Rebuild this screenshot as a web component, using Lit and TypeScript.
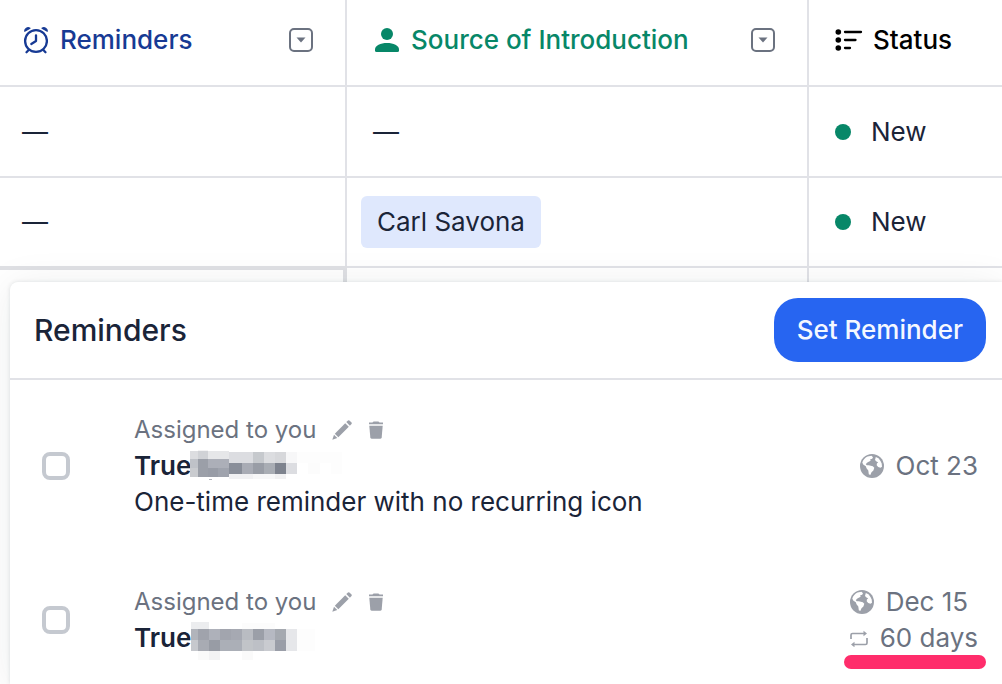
import { LitElement, html, css, svg } from "lit";
import { customElement, property } from "lit/decorators.js";

type Cell = [x: number, y: number, w: number, h: number, fill: string];

interface Reminder {
  id: string;
  name: string;
  redaction: Cell[];
  note?: string;
  date: string;
  repeat?: string;
}

const REMINDERS: Reminder[] = [
  {
    id: "r1",
    name: "True",
    note: "One-time reminder with no recurring icon",
    date: "Oct 23",
    redaction: [
      [0, 5, 8, 8, "#dcdde0"], [8, 5, 10, 8, "#d0d2d6"], [18, 5, 21, 8, "#e6e7e9"],
      [8, 4, 10, 1, "#f3f3f4"], [0, 13, 8, 9, "#bfc2c8"], [0, 22, 8, 9, "#c9cbcf"],
      [8, 13, 10, 18, "#9b9fa8"], [18, 13, 21, 9, "#acafb8"], [18, 22, 10, 9, "#989ca6"],
      [28, 22, 11, 9, "#9fa3ad"], [19, 33, 3, 1, "#b4b7bd"],
      [39, 6, 24, 11, "#dcdde1"], [63, 6, 11, 11, "#c6c9cd"], [74, 6, 11, 11, "#dcdde0"],
      [85, 6, 11, 11, "#d7d8db"], [96, 6, 11, 11, "#f7f7f8"],
      [39, 17, 13, 11, "#898e99"], [52, 17, 11, 11, "#a9acb5"], [63, 17, 11, 11, "#999da6"],
      [74, 17, 11, 11, "#a9adb4"], [85, 17, 11, 11, "#7e838e"], [96, 17, 11, 11, "#dcdde1"],
      [39, 28, 24, 5, "#f1f1f3"], [63, 28, 22, 5, "#f7f7f8"], [85, 28, 11, 5, "#f1f1f2"],
      [107, 6, 45, 11, "#fdfdfd"], [118, 17, 12, 11, "#fcfcfc"], [141, 17, 11, 11, "#fdfdfd"],
    ],
  },
  {
    id: "r2",
    name: "True",
    date: "Dec 15",
    repeat: "60 days",
    redaction: [
      [1, 4, 18, 7, "#ecedef"], [1, 11, 7, 11, "#b1b4bb"], [8, 11, 11, 11, "#a0a3ac"],
      [19, 11, 11, 11, "#aeb1ba"], [30, 11, 11, 11, "#a2a5ae"], [41, 11, 11, 11, "#a6a9b2"],
      [52, 11, 11, 11, "#b9bcc2"], [63, 11, 11, 11, "#9b9fa8"], [74, 11, 11, 11, "#b6b9c2"],
      [85, 11, 11, 11, "#a5a9b0"], [96, 11, 11, 22, "#e6e7ea"],
      [1, 22, 7, 11, "#c6c8cd"], [8, 22, 11, 11, "#a8abb3"], [19, 22, 11, 11, "#989ca5"],
      [30, 22, 22, 11, "#abafb7"], [52, 22, 11, 11, "#c1c4c8"], [63, 22, 11, 11, "#bdc0c6"],
      [74, 22, 11, 11, "#c9cbd0"], [85, 22, 11, 11, "#9a9ea8"],
      [8, 33, 11, 9, "#fafafa"], [19, 33, 11, 9, "#f3f3f4"], [52, 33, 11, 9, "#fafafa"],
      [52, 5, 33, 6, "#fcfcfc"], [107, 11, 18, 22, "#fdfdfd"],
    ],
  },
];

const alarmIcon = svg`<svg width="26" height="28" viewBox="-1 0 26 28" aria-hidden="true" fill="none" stroke="currentColor" stroke-width="2.300" stroke-linecap="round" stroke-linejoin="round">
  <circle cx="13" cy="15" r="10.900"/>
  <path d="M13 9.300V15L8.300 18M5.400 24.200 3.500 26.200M20.600 24.200 22.500 26.200"/>
  <path d="M1.700 5.200C1.600 2.600 4.500.700 7 2.200ZM24.300 5.200C24.400 2.600 21.500.700 19 2.200Z" fill="currentColor" stroke-width="1.200"/>
</svg>`;

const personIcon = svg`<svg width="26" height="24" viewBox="-2 0 26 24" aria-hidden="true" fill="currentColor">
  <circle cx="12" cy="6" r="6"/>
  <path d="M0 21.500C0 17.500 5.500 15 12 15S24 17.500 24 21.500V22.500Q24 24 22.500 24H1.500Q0 24 0 22.500Z"/>
</svg>`;

const listIcon = svg`<svg width="26" height="22" viewBox="0 0 26 22" overflow="visible" aria-hidden="true" fill="currentColor" stroke="currentColor" stroke-width="2.300" stroke-linecap="round">
  <path d="M10 3H26M10 11H20.500M10 19H15"/>
  <g stroke="none"><circle cx="3.300" cy="3" r="2.800"/><circle cx="3.300" cy="11" r="2.800"/><circle cx="3.300" cy="19" r="2.800"/></g>
</svg>`;

const caretIcon = svg`<svg width="10" height="6" viewBox="0 0 10 6" aria-hidden="true"><path d="M.5.500H9.500L5 5.500Z" fill="currentColor"/></svg>`;

const pencilIcon = svg`<svg width="20" height="20" viewBox="0 0 20 20" aria-hidden="true" fill="currentColor">
  <path d="M14.300 2.100 16 .5Q16.700-.1 17.400.5L19.500 2.600Q20.100 3.300 19.500 4L17.900 5.700Z"/>
  <path d="M13.200 3.200 16.800 6.800 6.300 17.200 2.800 13.700Z"/>
  <path d="M2 14.700 5.300 18 .3 19.700Z"/>
</svg>`;

const trashIcon = svg`<svg width="16" height="18" viewBox="0 0 16 18" aria-hidden="true" fill="currentColor">
  <path d="M1 1.500H4.500Q5 .5 6 .5H10Q11 .5 11.500 1.500H15V3.300H1Z"/>
  <path d="M1.300 4.700H14.700L13.700 16.200Q13.500 17.700 12 17.700H4Q2.500 17.700 2.300 16.200Z"/>
</svg>`;

const globeIcon = svg`<svg width="24" height="24" viewBox="0 0 24 24" aria-hidden="true">
  <circle cx="12" cy="12" r="12" fill="#9ca0a9"/>
  <path fill="#fff" d="M2.300 8.500C3.200 5.800 5 3.700 7.500 2.500L11.500 1.800 13 3.200 12.200 4.800 10 5.400 10.700 6.800 8.700 7.800 7 8.800 5.800 10.200 6.800 11.300 8.800 11.200 12.800 12.300 14.300 13.700 13.400 16.500 11.500 18.200 10.300 21 8.800 20.300 8.300 16.500 6.500 14.200 5.800 12.200 3.200 10.500Z"/>
  <path fill="#fff" d="M15.800 3 18.500 4.300 20.500 7 21.700 9.500 22 12.800 20.500 13.800 18.200 13 16.700 11.300 16.900 9.500 18.200 8.200 16.500 7.500 15 6Z"/>
</svg>`;

const repeatIcon = svg`<svg width="18" height="18" viewBox="0 -1 18 18" aria-hidden="true" fill="none" stroke="#9ca0a9" stroke-width="1.700">
  <path d="M1 9V5Q1 3.500 2.500 3.500H14M17 8V13Q17 14.500 15.500 14.500H4"/>
  <path d="M13.500.7 17 3.500 13.500 6.300ZM4.500 11.700 1 14.500 4.500 17.300Z" fill="#9ca0a9" stroke="none"/>
</svg>`;

@customElement("reminder-item")
export class ReminderItem extends LitElement {
  @property({ attribute: false }) item!: Reminder;

  static styles = css`
    :host {
      display: flex;
      align-items: center;
      padding: 32px 24px 32px 32px;
      font-size: 26px;
      line-height: 36px;
      color: #1a2438;
    }
    .check {
      appearance: none;
      box-sizing: border-box;
      flex: none;
      width: 28px;
      height: 28px;
      margin: 0 64px 0 0;
      border: 4px solid #c5c9d0;
      border-radius: 8px;
      background: #fff;
    }
    .body {
      flex: 1;
      min-width: 0;
    }
    .assigned {
      display: flex;
      align-items: center;
      font-size: 24px;
      color: #6b7280;
    }
    .tool {
      display: flex;
      padding: 0;
      margin-left: 16px;
      border: 0;
      background: none;
      color: #9ca0a9;
    }
    .name {
      display: flex;
      font-weight: 600;
    }
    .redacted {
      height: 36px;
      width: 152px;
      overflow: visible;
    }
    .when {
      position: relative;
      display: flex;
      flex-direction: column;
      flex: none;
      color: #6b7280;
    }
    .line {
      display: flex;
      align-items: center;
      gap: 12px;
    }
    .marker {
      position: absolute;
      left: -6px;
      right: -8px;
      bottom: -13px;
      height: 14px;
      border-radius: 7px;
      background: #ff2d6b;
    }
  `;

  render() {
    const r = this.item;
    return html`
      <input class="check" type="checkbox" id=${r.id} aria-label="Complete reminder" />
      <div class="body">
        <div class="assigned">
          <span>Assigned to you</span>
          <button class="tool" aria-label="Edit">${pencilIcon}</button>
          <button class="tool" aria-label="Delete">${trashIcon}</button>
        </div>
        <label class="name" for=${r.id}>
          <span>${r.name}</span>
          <svg class="redacted" viewBox="1 2 152 36" shape-rendering="crispEdges" aria-hidden="true">
            ${r.redaction.map(([x, y, w, h, fill]) => svg`<rect x=${x} y=${y} width=${w} height=${h} fill=${fill}></rect>`)}
          </svg>
        </label>
        ${r.note ? html`<div>${r.note}</div>` : null}
      </div>
      <div class="when">
        <div class="line">${globeIcon}<span>${r.date}</span></div>
        ${r.repeat
          ? html`<div class="line">${repeatIcon}<span>${r.repeat}</span></div><div class="marker"></div>`
          : null}
      </div>
    `;
  }
}

@customElement("app-root")
export class AppRoot extends LitElement {
  static styles = css`
    :host {
      display: block;
      position: relative;
      min-height: 100vh;
      overflow: hidden;
      background: #fff;
      color: #1a2438;
      font: 400 26px/36px Inter, sans-serif;
    }
    button {
      font: inherit;
    }
    .grid {
      width: 100%;
      table-layout: fixed;
      border-collapse: separate;
      border-spacing: 0;
    }
    .reminders {
      width: 347px;
    }
    .source {
      width: 462px;
    }
    th,
    td {
      box-sizing: border-box;
      height: 90px;
      padding: 0 32px 0 26px;
      border-right: 2px solid #e1e2e7;
      border-bottom: 2px solid #e1e2e7;
      text-align: left;
      white-space: nowrap;
    }
    th {
      height: 87px;
      padding-bottom: 6px;
      font-weight: 500;
    }
    tbody tr:first-child td {
      height: 91px;
    }
    tbody tr:last-child td {
      border-bottom: 0;
    }
    td:first-child,
    th:first-child {
      padding-left: 22px;
    }
    th:last-child,
    td:last-child {
      border-right: 0;
    }
    .head {
      display: flex;
      align-items: center;
      gap: 12px;
    }
    .title {
      flex: 1;
    }
    .blue {
      color: #173a94;
    }
    .green {
      color: #078768;
    }
    .black {
      color: #000;
    }
    .caret {
      display: flex;
      align-items: center;
      justify-content: center;
      box-sizing: border-box;
      width: 24px;
      height: 24px;
      padding: 0;
      border: 2px solid #6b7280;
      border-radius: 5px;
      background: none;
      color: #6b7280;
    }
    .status {
      display: flex;
      align-items: center;
      gap: 20px;
    }
    .dot {
      width: 16px;
      height: 16px;
      border-radius: 50%;
      background: #078768;
    }
    td.chips {
      padding-left: 14px;
    }
    .chip {
      display: inline-block;
      padding: 8px 16px;
      border-radius: 6px;
      background: #dfe8fd;
    }
    td.selected {
      position: relative;
    }
    .ring {
      position: absolute;
      inset: -2px -2px 0 -4px;
      border: 4px solid #dfe0e4;
      border-bottom: 0;
    }
    .panel {
      position: absolute;
      top: 282px;
      left: 10px;
      right: 0;
      bottom: 0;
      border-radius: 8px 0 0 0;
      background: #fff;
      box-shadow: 0 0 4px rgba(20, 30, 40, 0.12), 0 4px 40px rgba(20, 40, 40, 0.08);
    }
    .bar {
      display: flex;
      align-items: center;
      justify-content: space-between;
      padding: 16px 16px 16px 24px;
      border-bottom: 2px solid #e1e2e7;
    }
    .heading {
      margin: 0;
      font-size: 30px;
      font-weight: 500;
    }
    .set {
      padding: 14px 23px;
      border: 0;
      border-radius: 24px;
      background: #2765f1;
      color: #f5f8ff;
      font-weight: 500;
    }
  `;

  render() {
    const status = html`<div class="status"><span class="dot"></span>New</div>`;
    return html`
      <table class="grid">
        <colgroup>
          <col class="reminders" />
          <col class="source" />
          <col />
        </colgroup>
        <thead>
          <tr>
            <th>
              <div class="head blue">
                ${alarmIcon}<span class="title">Reminders</span>
                <button class="caret" aria-label="Reminders options">${caretIcon}</button>
              </div>
            </th>
            <th>
              <div class="head green">
                ${personIcon}<span class="title">Source of Introduction</span>
                <button class="caret" aria-label="Source options">${caretIcon}</button>
              </div>
            </th>
            <th>
              <div class="head black">${listIcon}<span class="title">Status</span></div>
            </th>
          </tr>
        </thead>
        <tbody>
          <tr><td>—</td><td>—</td><td>${status}</td></tr>
          <tr><td>—</td><td class="chips"><span class="chip">Carl Savona</span></td><td>${status}</td></tr>
          <tr><td class="selected"><div class="ring"></div></td><td></td><td></td></tr>
        </tbody>
      </table>
      <section class="panel" aria-labelledby="panel-heading">
        <header class="bar">
          <h2 class="heading" id="panel-heading">Reminders</h2>
          <button class="set">Set Reminder</button>
        </header>
        ${REMINDERS.map((r) => html`<reminder-item .item=${r}></reminder-item>`)}
      </section>
    `;
  }
}
